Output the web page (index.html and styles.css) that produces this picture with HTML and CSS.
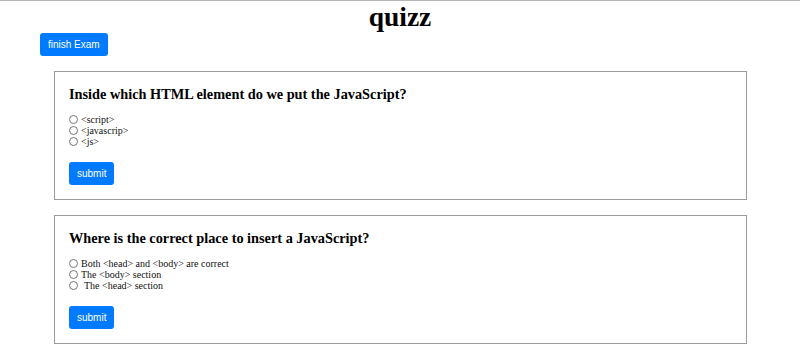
FILE: index.html
```html
<!DOCTYPE html>
<html>
<head>
<meta charset="utf-8">
<link rel="stylesheet" href="styles.css">
</head>
<body>
<div class="topline"></div>
<h1 class="title">quizz</h1>
<button class="btn btn-finish">finish Exam</button>
<div class="card">
  <h3 class="question">Inside which HTML element do we put the JavaScript?</h3>
  <div class="options">
    <label class="opt"><input type="radio" name="q1"><span>&lt;script&gt;</span></label>
    <label class="opt"><input type="radio" name="q1"><span>&lt;javascrip&gt;</span></label>
    <label class="opt"><input type="radio" name="q1"><span>&lt;js&gt;</span></label>
  </div>
  <button class="btn">submit</button>
</div>
<div class="card">
  <h3 class="question">Where is the correct place to insert a JavaScript?</h3>
  <div class="options">
    <label class="opt"><input type="radio" name="q2"><span>Both &lt;head&gt; and &lt;body&gt; are correct</span></label>
    <label class="opt"><input type="radio" name="q2"><span>The &lt;body&gt; section</span></label>
    <label class="opt"><input type="radio" name="q2"><span class="indent">The &lt;head&gt; section</span></label>
  </div>
  <button class="btn">submit</button>
</div>
</body>
</html>
```
FILE: styles.css
```css
html, body {
  margin: 0;
  padding: 0;
  background: #fff;
}
body {
  font-family: "Liberation Serif", "Times New Roman", serif;
  color: #000;
}
.topline {
  height: 1px;
  background: #b4b4b4;
}
.title {
  margin: 0;
  text-align: center;
  font-size: 27.5px;
  line-height: 32px;
  font-weight: bold;
}
.btn {
  display: block;
  height: 23px;
  padding: 0 8px;
  border: none;
  border-radius: 3px;
  background: #007bff;
  color: #fff;
  font-family: "Liberation Sans", Arial, sans-serif;
  font-size: 10px;
}
.btn-finish {
  margin-left: 40px;
}
.card {
  margin: 15px 53px 0 54px;
  border: 1px solid #9a9a9a;
  padding: 14px 14px 14px;
}
.question {
  margin: 0 0 11px;
  font-size: 14.3px;
  line-height: 17px;
  font-weight: bold;
}
.options {
  display: flex;
  flex-direction: column;
  margin-bottom: 15px;
  font-size: 10px;
  line-height: 11px;
  color: #111;
}
.opt {
  display: flex;
  align-items: center;
  height: 11px;
}
.opt input {
  width: 9px;
  height: 9px;
  margin: 0 3px 0 0;
}
.indent {
  padding-left: 3px;
}
```
